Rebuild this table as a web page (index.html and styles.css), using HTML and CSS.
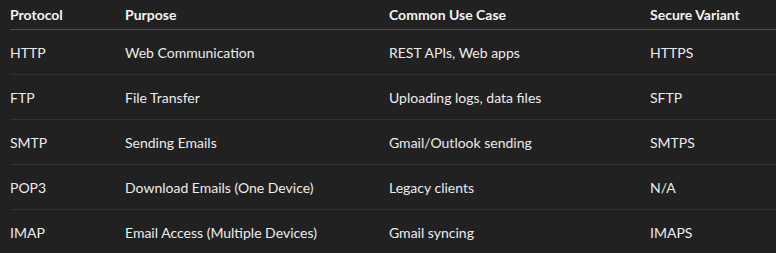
FILE: index.html
```html
<!DOCTYPE html>
<html>
<head>
<meta charset="utf-8">
<link rel="stylesheet" href="styles.css">
</head>
<body>
<div class="wrap">
<table class="tbl">
  <colgroup>
    <col class="c1"><col class="c2"><col class="c3"><col class="c4">
  </colgroup>
  <thead>
    <tr><th>Protocol</th><th>Purpose</th><th>Common Use Case</th><th>Secure Variant</th></tr>
  </thead>
  <tbody>
    <tr><td>HTTP</td><td>Web Communication</td><td>REST APIs, Web apps</td><td>HTTPS</td></tr>
    <tr><td>FTP</td><td>File Transfer</td><td>Uploading logs, data files</td><td>SFTP</td></tr>
    <tr><td>SMTP</td><td>Sending Emails</td><td>Gmail/Outlook sending</td><td>SMTPS</td></tr>
    <tr><td>POP3</td><td>Download Emails (One Device)</td><td>Legacy clients</td><td>N/A</td></tr>
    <tr><td>IMAP</td><td>Email Access (Multiple Devices)</td><td>Gmail syncing</td><td>IMAPS</td></tr>
  </tbody>
</table>
</div>
</body>
</html>
```
FILE: styles.css
```css
html, body {
  margin: 0;
  padding: 0;
  background: #212121;
  overflow: hidden;
}
.wrap {
  padding-left: 10px;
}
.tbl {
  border-collapse: collapse;
  table-layout: fixed;
  width: 100%;
  font-family: "Segoe UI", "Lato", sans-serif;
  font-size: 14px;
  color: #ececec;
}
.c1 { width: 115px; }
.c2 { width: 264px; }
.c3 { width: 261px; }
.tbl th {
  text-align: left;
  font-weight: 700;
  height: 29px;
  padding: 0;
  vertical-align: middle;
  border-bottom: 1px solid #4e4e4e;
  color: #f3f3f3;
}
.tbl td {
  padding: 0;
  height: 44px;
  vertical-align: middle;
  border-bottom: 1px solid #333333;
}
```
